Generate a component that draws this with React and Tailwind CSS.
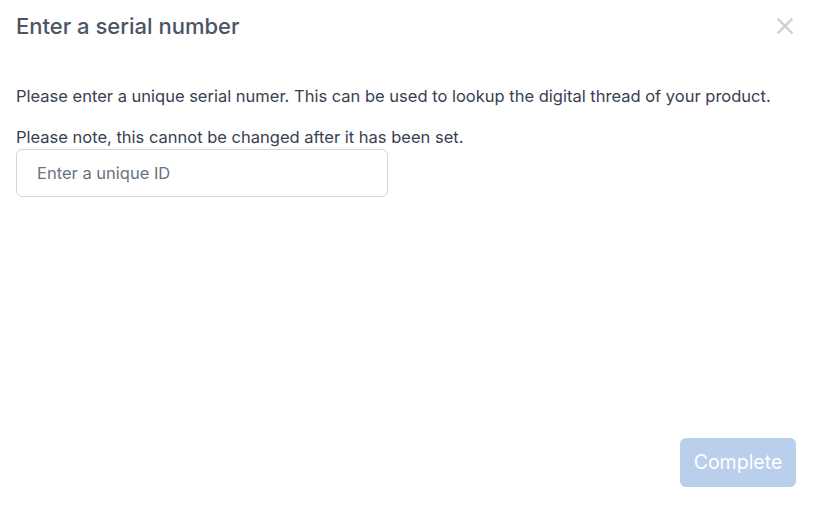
import React, { useState } from "react";

// close icon drawn as two strokes
const CloseIcon = () => (
  <svg width="18" height="18" viewBox="0 0 18 18" fill="none" stroke="currentColor" strokeWidth="2.4" strokeLinecap="square">
    <path d="M2.5 2.5L15.5 15.5M15.5 2.5L2.5 15.5" />
  </svg>
);

const SerialModal = () => {
  const [serial, setSerial] = useState("");

  return (
    <div className="h-[520px] w-[816px] bg-white flex flex-col pl-4 pr-5 pt-3 pb-[33px] font-['Inter',sans-serif]">
      <div className="flex items-center justify-between h-7">
        <h2 className="text-[22px] font-medium text-[#4b5563] leading-7">Enter a serial number</h2>
        <button className="text-[#cbd0d6] mr-[2px]">
          <CloseIcon />
        </button>
      </div>

      <p className="mt-11 text-[16.5px] leading-6 text-[#374151]">
        Please enter a unique serial numer. This can be used to lookup the digital thread of your product.
      </p>
      <p className="mt-[17px] text-[16.5px] leading-6 text-[#374151]">
        Please note, this cannot be changed after it has been set.
      </p>
      <input
        className="mt-0 w-[372px] h-12 rounded-md border border-[#d1d5db] px-5 text-[16.5px] text-[#374151] placeholder:text-[#6b7280] outline-none"
        placeholder="Enter a unique ID"
        value={serial}
        onChange={(e) => setSerial(e.target.value)}
      />

      <div className="mt-auto flex justify-end">
        <button
          disabled={!serial}
          className="h-[49px] w-[116px] rounded-md bg-[#b9cfec] text-white text-[19.5px]"
        >
          Complete
        </button>
      </div>
    </div>
  );
};

export default function App() {
  return <SerialModal />;
}
